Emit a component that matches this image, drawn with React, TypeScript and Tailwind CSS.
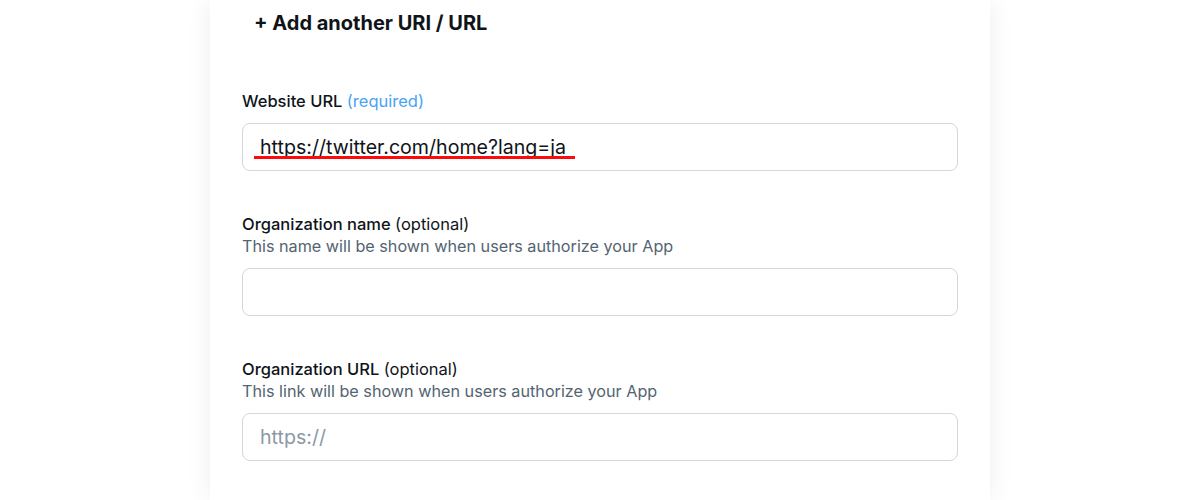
const font = { fontFamily: 'Inter, "Noto Sans", sans-serif' };

function Field({
  label,
  hint,
  note,
  noteClass,
  value,
  placeholder,
  underline,
}: {
  label: string;
  hint?: string;
  note: string;
  noteClass: string;
  value?: string;
  placeholder?: string;
  underline?: boolean;
}) {
  return (
    <div>
      <p className="text-[16.5px] leading-[22px] font-medium text-[#0f1419]">
        {label} <span className={`font-normal ${noteClass}`}>{note}</span>
      </p>
      {hint && <p className="text-[16.2px] leading-[22px] text-[#536471]">{hint}</p>}
      <div className="relative mt-[11px]">
        <input
          readOnly
          value={value ?? ''}
          placeholder={placeholder}
          className="w-full h-12 rounded-lg border border-[#cfd9de] bg-white pl-[17px] text-[19.6px] text-[#0f1419] placeholder:text-[#8b98a5] outline-none"
          style={font}
        />
        {underline && (
          <div className="absolute left-3 top-[33px] h-[3px] w-[321px] bg-[#ff0a0a]" />
        )}
      </div>
    </div>
  );
}

export default function App() {
  return (
    <div className="min-h-[500px] bg-white flex justify-center overflow-hidden" style={font}>
      <div className="w-[780px] bg-white shadow-[0_0_24px_rgba(0,0,0,0.07)] px-8 pt-[11px] pb-10">
        <button className="ml-3 text-[20px] leading-6 font-bold text-[#0f1419]">+ Add another URI / URL</button>

        <div className="mt-[54px]">
          <Field
            label="Website URL"
            note="(required)"
            noteClass="text-[#4aa3f5]"
            value="https://twitter.com/home?lang=ja"
            underline
          />
        </div>

        <div className="mt-[42px]">
          <Field
            label="Organization name"
            note="(optional)"
            noteClass="text-[#0f1419]"
            hint="This name will be shown when users authorize your App"
          />
        </div>

        <div className="mt-[42px]">
          <Field
            label="Organization URL"
            note="(optional)"
            noteClass="text-[#0f1419]"
            hint="This link will be shown when users authorize your App"
            placeholder="https://"
          />
        </div>
      </div>
    </div>
  );
}
